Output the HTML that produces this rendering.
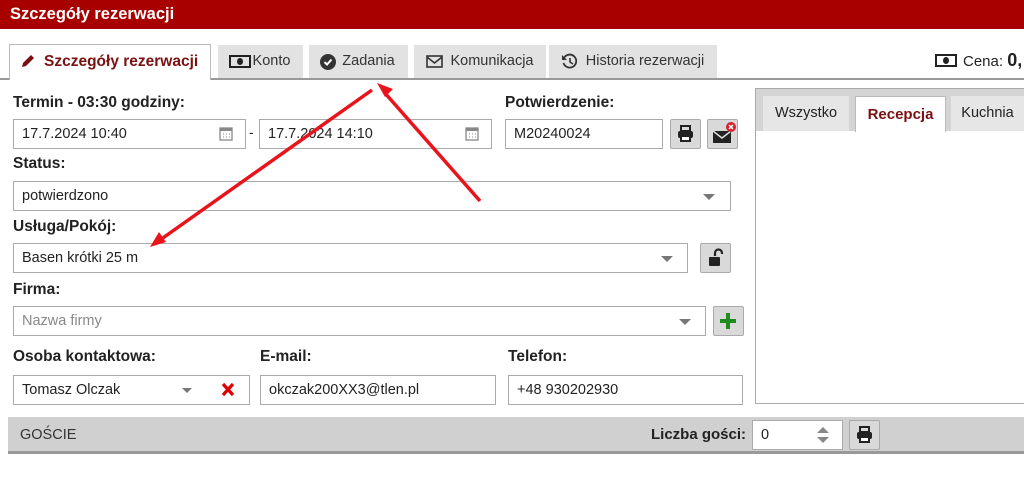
<!DOCTYPE html>
<html><head><meta charset="utf-8"><style>
*{box-sizing:border-box;margin:0;padding:0}
body{width:1024px;height:500px;background:#fff;font-family:"Liberation Sans","DejaVu Sans",sans-serif;font-size:14px;color:#222;position:relative;overflow:hidden}
.a{position:absolute}
.bar{left:0;top:0;width:1024px;height:29px;background:#a80000;color:#fff;font-weight:bold;font-size:16.5px;padding:5px 10px}
.tab{top:45px;height:33px;background:#e2e2e2;color:#333;font-size:14.5px;line-height:33px;text-align:center;white-space:nowrap}
.lbl{font-weight:bold;font-size:15.5px;color:#222}
.in{border:1px solid #aaa;background:#fff;height:30px;font-size:14.5px;line-height:28px;padding-left:8px;color:#222}
.btn{border:1px solid #aaa;background:#d9d9d9;border-radius:2px;width:31px;height:30px}
.caret{width:0;height:0;border-left:6px solid transparent;border-right:6px solid transparent;border-top:6px solid #777}
</style></head><body>
<div class="a bar">Szczegóły rezerwacji</div>
<div class="a" style="left:0;top:78px;width:1024px;height:2px;background:#999"></div>
<div class="a" style="left:9px;top:44px;width:202px;height:36px;background:#fff;border:1px solid #bbb;border-bottom:none;color:#7a1010;font-weight:bold;font-size:15.5px;line-height:34px;padding-left:34px;white-space:nowrap">Szczegóły rezerwacji</div>
<svg class="a" style="left:20px;top:53px" width="16" height="16" viewBox="0 0 16 16"><path d="M2 14l1-4 8-8 3 3-8 8z" fill="#7a1010"/></svg>
<div class="a tab" style="left:218px;width:85px;padding-left:22px">Konto</div>
<svg class="a" style="left:229px;top:55px" width="22" height="13"><rect x="1" y="1" width="20" height="11" fill="none" stroke="#222" stroke-width="2"/><ellipse cx="11" cy="6.5" rx="3" ry="3.5" fill="#222"/></svg>
<div class="a tab" style="left:309px;width:99px;padding-left:20px">Zadania</div>
<svg class="a" style="left:320px;top:54px" width="16" height="16"><circle cx="8" cy="8" r="8" fill="#333"/><path d="M4.5 8l2.5 2.5 4.5-5" stroke="#fff" stroke-width="2" fill="none"/></svg>
<div class="a tab" style="left:414px;width:132px;padding-left:24px">Komunikacja</div>
<svg class="a" style="left:426px;top:55px" width="17" height="13"><rect x="1" y="1" width="15" height="11" fill="none" stroke="#333" stroke-width="1.6"/><path d="M1 2l7.5 6 7.5-6" fill="none" stroke="#333" stroke-width="1.6"/></svg>
<div class="a tab" style="left:549px;width:168px;padding-left:24px">Historia rezerwacji</div>
<svg class="a" style="left:561px;top:53px" width="17" height="17"><path d="M3 5a6.5 6.5 0 1 1 -0.5 5" fill="none" stroke="#333" stroke-width="1.8"/><path d="M1 2v5h5z" fill="#333"/><path d="M9 5v4l3 2" fill="none" stroke="#333" stroke-width="1.6"/></svg>
<svg class="a" style="left:935px;top:54px" width="22" height="13"><rect x="1" y="1" width="20" height="11" fill="none" stroke="#222" stroke-width="2"/><ellipse cx="11" cy="6.5" rx="3" ry="3.5" fill="#222"/></svg>
<div class="a" style="left:963px;top:50px;font-size:15px;white-space:nowrap">Cena: <b style="font-size:18px">0,</b></div>

<div class="a lbl" style="left:13px;top:94px">Termin - 03:30 godziny:</div>
<div class="a in" style="left:13px;top:119px;width:233px">17.7.2024 10:40</div>
<div class="a" style="left:249px;top:124px">-</div>
<div class="a in" style="left:259px;top:119px;width:233px">17.7.2024 14:10</div>
<svg class="a" style="left:219px;top:126px" width="14" height="15"><rect x="1" y="2" width="12" height="12" fill="none" stroke="#888" stroke-width="1.3"/><rect x="1" y="2" width="12" height="3" fill="#888"/><path d="M4 8h1M7 8h1M10 8h1M4 11h1M7 11h1M10 11h1" stroke="#888"/></svg>
<svg class="a" style="left:465px;top:126px" width="14" height="15"><rect x="1" y="2" width="12" height="12" fill="none" stroke="#888" stroke-width="1.3"/><rect x="1" y="2" width="12" height="3" fill="#888"/><path d="M4 8h1M7 8h1M10 8h1M4 11h1M7 11h1M10 11h1" stroke="#888"/></svg>
<div class="a lbl" style="left:505px;top:94px">Potwierdzenie:</div>
<div class="a in" style="left:505px;top:119px;width:158px">M20240024</div>
<div class="a btn" style="left:670px;top:119px"></div>
<svg class="a" style="left:677px;top:125px" width="17" height="17"><rect x="4" y="1" width="9" height="5" fill="none" stroke="#222" stroke-width="2"/><rect x="1" y="6" width="15" height="7" rx="2" fill="#222"/><rect x="4" y="11" width="9" height="5" fill="#fff" stroke="#222" stroke-width="2"/></svg>
<div class="a btn" style="left:707px;top:119px"></div>
<svg class="a" style="left:710px;top:119px" width="28" height="26"><path d="M3 12h18v12H3z" fill="#222"/><path d="M3 12l9 7 9-7" fill="none" stroke="#ddd" stroke-width="1.5"/><circle cx="21" cy="8" r="5" fill="#d2222d"/><path d="M19 6l4 4M23 6l-4 4" stroke="#fff" stroke-width="1.5"/></svg>

<div class="a lbl" style="left:13px;top:155px">Status:</div>
<div class="a in" style="left:13px;top:181px;width:718px">potwierdzono</div>
<div class="a caret" style="left:703px;top:194px"></div>
<div class="a lbl" style="left:13px;top:218px">Usługa/Pokój:</div>
<div class="a in" style="left:13px;top:243px;width:675px">Basen krótki 25 m</div>
<div class="a caret" style="left:661px;top:256px"></div>
<div class="a btn" style="left:700px;top:243px"></div>
<svg class="a" style="left:707px;top:248px" width="17" height="20"><path d="M8 8V5a3.5 3.5 0 0 1 7 0v1" fill="none" stroke="#222" stroke-width="2.2"/><rect x="2" y="9" width="11" height="9" rx="1" fill="#222"/></svg>
<div class="a lbl" style="left:13px;top:281px">Firma:</div>
<div class="a in" style="left:13px;top:306px;width:693px;color:#888">Nazwa firmy</div>
<div class="a caret" style="left:679px;top:319px"></div>
<div class="a btn" style="left:713px;top:306px"></div>
<div class="a" style="left:720px;top:313px;width:16px;height:16px"><div class="a" style="left:6px;top:0;width:4px;height:16px;background:#1e8c1e"></div><div class="a" style="left:0;top:6px;width:16px;height:4px;background:#1e8c1e"></div></div>

<div class="a lbl" style="left:13px;top:348px">Osoba kontaktowa:</div>
<div class="a in" style="left:13px;top:375px;width:237px">Tomasz Olczak</div>
<div class="a" style="left:182px;top:388px;border-left:5px solid transparent;border-right:5px solid transparent;border-top:5px solid #777;width:0"></div>
<svg class="a" style="left:221px;top:382px" width="14" height="15"><path d="M2 2l10 11M12 2L2 13" stroke="#d00" stroke-width="3.2"/></svg>
<div class="a lbl" style="left:260px;top:348px">E-mail:</div>
<div class="a in" style="left:260px;top:375px;width:236px">okczak200XX3@tlen.pl</div>
<div class="a lbl" style="left:508px;top:348px">Telefon:</div>
<div class="a in" style="left:508px;top:375px;width:235px">+48 930202930</div>

<div class="a" style="left:755px;top:88px;width:280px;height:316px;border:1px solid #aaa;border-right:none"></div>
<div class="a" style="left:756px;top:89px;width:268px;height:42px;background:#d4d4d4"></div>
<div class="a" style="left:763px;top:96px;width:86px;height:35px;background:#e6e6e6;line-height:35px;text-align:center;font-size:14.5px">Wszystko</div>
<div class="a" style="left:855px;top:96px;width:91px;height:36px;background:#fff;line-height:35px;text-align:center;color:#7a1010;font-weight:bold;border:1px solid #bbb;border-bottom:none;font-size:15px">Recepcja</div>
<div class="a" style="left:951px;top:96px;width:73px;height:35px;background:#e6e6e6;line-height:35px;text-align:center;font-size:14.5px">Kuchnia</div>

<div class="a" style="left:8px;top:417px;width:1016px;height:37px;background:#d0d0d0;border-bottom:3px solid #999"></div>
<div class="a" style="left:20px;top:427px;color:#333;font-size:14.5px">GOŚCIE</div>
<div class="a lbl" style="left:651px;top:426px;font-size:15px">Liczba gości:</div>
<div class="a in" style="left:752px;top:420px;width:91px">0</div>
<div class="a" style="left:817px;top:427px;border-left:6px solid transparent;border-right:6px solid transparent;border-bottom:6px solid #888;width:0"></div>
<div class="a" style="left:817px;top:437px;border-left:6px solid transparent;border-right:6px solid transparent;border-top:6px solid #888;width:0"></div>
<div class="a btn" style="left:849px;top:420px;width:31px"></div>
<svg class="a" style="left:856px;top:426px" width="17" height="17"><rect x="4" y="1" width="9" height="5" fill="none" stroke="#222" stroke-width="2"/><rect x="1" y="6" width="15" height="7" rx="2" fill="#222"/><rect x="4" y="11" width="9" height="5" fill="#fff" stroke="#222" stroke-width="2"/></svg>

<svg class="a" style="left:0;top:0" width="1024" height="500">
<line x1="480" y1="201" x2="384" y2="92" stroke="#e8141b" stroke-width="3.5"/>
<path d="M377 83l16 6-8 8z" fill="#e8141b"/>
<line x1="372" y1="90" x2="160" y2="240" stroke="#e8141b" stroke-width="3.5"/>
<path d="M150 247l9-15 7 10z" fill="#e8141b"/>
</svg>
</body></html>
